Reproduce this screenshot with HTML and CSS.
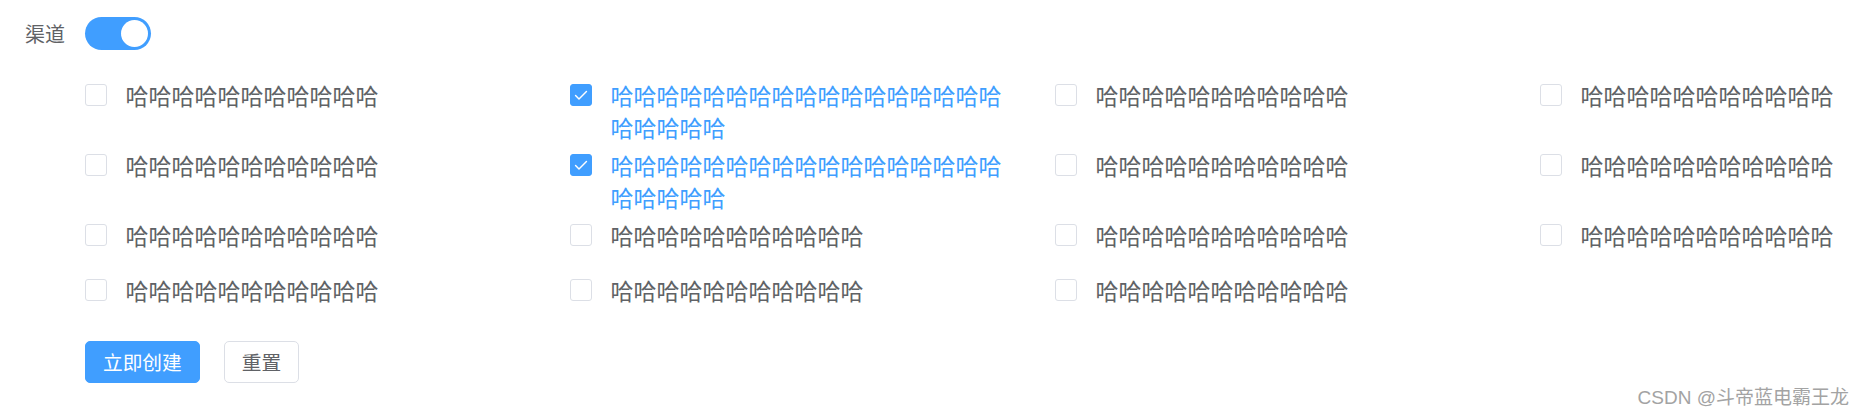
FILE: index.html
```html
<!DOCTYPE html>
<html lang="zh-CN">
<head>
<meta charset="utf-8">
<title>渠道</title>
<link rel="stylesheet" href="styles.css">
</head>
<body>
<div class="page">
  <form class="form">
    <div class="form-item">
      <label class="label">渠道</label>
      <div class="switch"><span class="knob"></span></div>
    </div>

    <div class="grid">
      <label class="item"><span class="box"></span><span class="text">哈哈哈哈哈哈哈哈哈哈哈</span></label>
      <label class="item checked"><span class="box"><svg viewBox="0 0 22 22" width="22" height="22"><polyline points="5,11.5 8.8,15.3 17,7.2" fill="none" stroke="#fff" stroke-width="1.6" stroke-linecap="round" stroke-linejoin="round"/></svg></span><span class="text">哈哈哈哈哈哈哈哈哈哈哈哈哈哈哈哈哈哈哈哈哈哈</span></label>
      <label class="item"><span class="box"></span><span class="text">哈哈哈哈哈哈哈哈哈哈哈</span></label>
      <label class="item"><span class="box"></span><span class="text">哈哈哈哈哈哈哈哈哈哈哈</span></label>

      <label class="item"><span class="box"></span><span class="text">哈哈哈哈哈哈哈哈哈哈哈</span></label>
      <label class="item checked"><span class="box"><svg viewBox="0 0 22 22" width="22" height="22"><polyline points="5,11.5 8.8,15.3 17,7.2" fill="none" stroke="#fff" stroke-width="1.6" stroke-linecap="round" stroke-linejoin="round"/></svg></span><span class="text">哈哈哈哈哈哈哈哈哈哈哈哈哈哈哈哈哈哈哈哈哈哈</span></label>
      <label class="item"><span class="box"></span><span class="text">哈哈哈哈哈哈哈哈哈哈哈</span></label>
      <label class="item"><span class="box"></span><span class="text">哈哈哈哈哈哈哈哈哈哈哈</span></label>

      <label class="item"><span class="box"></span><span class="text">哈哈哈哈哈哈哈哈哈哈哈</span></label>
      <label class="item"><span class="box"></span><span class="text">哈哈哈哈哈哈哈哈哈哈哈</span></label>
      <label class="item"><span class="box"></span><span class="text">哈哈哈哈哈哈哈哈哈哈哈</span></label>
      <label class="item"><span class="box"></span><span class="text">哈哈哈哈哈哈哈哈哈哈哈</span></label>

      <label class="item"><span class="box"></span><span class="text">哈哈哈哈哈哈哈哈哈哈哈</span></label>
      <label class="item"><span class="box"></span><span class="text">哈哈哈哈哈哈哈哈哈哈哈</span></label>
      <label class="item"><span class="box"></span><span class="text">哈哈哈哈哈哈哈哈哈哈哈</span></label>
    </div>

    <div class="actions">
      <button type="button" class="btn btn-primary">立即创建</button>
      <button type="button" class="btn btn-default">重置</button>
    </div>
  </form>
  <div class="watermark">CSDN @斗帝蓝电霸王龙</div>
</div>
</body>
</html>
```

FILE: styles.css
```css
html, body {
  margin: 0;
  padding: 0;
  background: #fff;
  overflow: hidden;
}

body {
  font-family: "Noto Sans CJK SC", "Noto Sans", sans-serif;
  color: #606266;
}

.page {
  position: relative;
  width: 1864px;
  height: 417px;
}

.form {
  padding-top: 17px;
}

.form-item {
  display: flex;
  align-items: center;
  height: 33px;
}

.label {
  width: 85px;
  box-sizing: border-box;
  padding-right: 20px;
  text-align: right;
  font-size: 20px;
  line-height: 33px;
  color: #606266;
}

.switch {
  width: 66px;
  height: 33px;
  box-sizing: border-box;
  padding: 3px;
  border-radius: 17px;
  background: #409eff;
  display: flex;
  justify-content: flex-end;
}

.knob {
  width: 27px;
  height: 27px;
  border-radius: 50%;
  background: #fff;
}

.grid {
  margin-top: 29px;
  margin-left: 85px;
  display: grid;
  grid-template-columns: 485px 485px 485px 1fr;
  row-gap: 6px;
}

.item {
  display: flex;
  align-items: flex-start;
  min-height: 49px;
  padding-right: 49px;
  cursor: pointer;
}

.item:nth-child(4n) {
  padding-right: 0;
}

.box {
  flex: 0 0 auto;
  width: 22px;
  height: 22px;
  box-sizing: border-box;
  margin-top: 5px;
  border: 1px solid #dcdfe6;
  border-radius: 3px;
  background: #fff;
  display: flex;
  align-items: center;
  justify-content: center;
}

.box svg {
  display: block;
}

.item.checked .box {
  background: #409eff;
  border-color: #409eff;
}

.text {
  padding-left: 18.5px;
  font-size: 23px;
  line-height: 32px;
  color: #606266;
}

.item.checked .text {
  color: #409eff;
}

.actions {
  margin-top: 18px;
  margin-left: 85px;
  display: flex;
  gap: 24px;
}

.btn {
  height: 42px;
  box-sizing: border-box;
  margin: 0;
  border-radius: 5px;
  font-family: "Noto Sans CJK SC", "Noto Sans", sans-serif;
  font-size: 19.7px;
  line-height: 1;
  white-space: nowrap;
  cursor: pointer;
  display: inline-flex;
  align-items: center;
  justify-content: center;
}

.btn-primary {
  padding: 0 17px;
  background: #409eff;
  border: 1px solid #409eff;
  color: #fff;
}

.btn-default {
  padding: 0 17px;
  background: #fff;
  border: 1px solid #dcdfe6;
  color: #606266;
}

.watermark {
  position: absolute;
  right: 15px;
  top: 386px;
  font-family: "Liberation Sans", "Noto Sans CJK SC", sans-serif;
  font-size: 19px;
  line-height: 24px;
  color: #a3a3a3;
  white-space: nowrap;
}
```
